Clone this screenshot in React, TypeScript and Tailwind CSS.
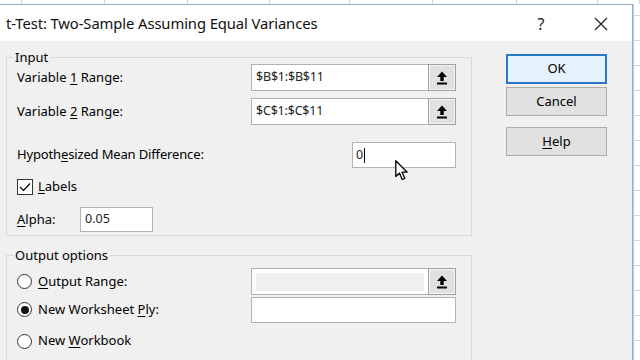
import React from "react";

const F = "font-['Noto_Sans',sans-serif]";

function U({ children }: { children: React.ReactNode }) {
  return <span className="underline underline-offset-2 decoration-1">{children}</span>;
}

function UploadIcon() {
  return (
    <svg width="10" height="14" viewBox="0 0 10 14">
      <polygon points="0,6 5,0.5 10,6" fill="#000" />
      <rect x="3.3" y="5.5" width="3.4" height="4.5" fill="#000" />
      <rect x="0" y="11.5" width="10" height="2" fill="#000" />
    </svg>
  );
}

function RangeBox({ value, disabled }: { value?: string; disabled?: boolean }) {
  return (
    <div className="flex w-[205px] h-[27px]">
      <div className="flex-1 flex items-center bg-white border border-[#b4b4b4] border-r-0 px-[4px]">
        {disabled ? (
          <div className="w-full h-[18px] bg-[#efefef]" />
        ) : (
          <span className="text-[12.5px] text-[#222] tracking-[-0.2px]">{value}</span>
        )}
      </div>
      <div className="w-[28px] flex items-center justify-center bg-[#e1e1e1] border border-[#a0a0a0] shadow-[inset_0_0_0_1px_#f4f4f4]">
        <UploadIcon />
      </div>
    </div>
  );
}

function Checkbox() {
  return (
    <div className="w-[16px] h-[16px] border border-[#333] bg-white flex items-center justify-center">
      <svg width="12" height="10" viewBox="0 0 12 10">
        <polyline points="1,5 4.5,8.5 11,1.5" fill="none" stroke="#000" strokeWidth="1.2" />
      </svg>
    </div>
  );
}

function Radio({ checked }: { checked?: boolean }) {
  return (
    <div className="w-[15px] h-[15px] rounded-full border border-[#333] bg-white flex items-center justify-center">
      {checked && <div className="w-[8px] h-[8px] rounded-full bg-[#111]" />}
    </div>
  );
}

export default function App() {
  const topCells = [22, 83, 83, 82, 80, 83, 84, 81, 42];
  return (
    <div className={`relative w-[640px] h-[360px] overflow-hidden bg-white flex flex-col ${F} text-[13px] text-black`}>
      <div className="h-[4px] flex shrink-0">
        {topCells.map((w, i) => (
          <div key={i} style={{ width: w }} className="h-full border-r border-[#d4d4d4] shrink-0" />
        ))}
      </div>
      <div className="flex flex-1">
        <div className="w-[633px] shrink-0 flex flex-col border-t border-r border-[#93aed0]">
          {/* Title bar */}
          <div className="h-[36px] bg-white flex items-center pt-[1px]">
            <div className="pl-[6px] text-[14.8px] text-[#111] tracking-[-0.1px]">
              t-Test: Two-Sample Assuming Equal Variances
            </div>
            <div className="flex-1" />
            <div className="w-[12px] text-[16px] text-[#222] mr-[47px] text-center">?</div>
            <svg width="14" height="14" viewBox="0 0 14 14" className="mr-[24px]">
              <path d="M1 1 L13 13 M13 1 L1 13" stroke="#222" strokeWidth="1.2" />
            </svg>
          </div>
          {/* Body */}
          <div className="flex-1 bg-[#f0f0f0] flex">
            <div className="ml-[6px] w-[466px] flex flex-col">
              <fieldset className="mt-[8px] border border-[#d9d9d9] pl-[10px] pr-[15px] pb-[3px]">
                <legend className="-ml-[4px] px-[2px] leading-[16px] text-[13px]">Input</legend>
                <div className="flex items-center h-[27px] -mt-[1px]">
                  <div className="w-[234px]">Variable <U>1</U> Range:</div>
                  <RangeBox value="$B$1:$B$11" />
                </div>
                <div className="flex items-center h-[27px] mt-[7px]">
                  <div className="w-[234px]">Variable <U>2</U> Range:</div>
                  <RangeBox value="$C$1:$C$11" />
                </div>
                <div className="flex items-center h-[26px] mt-[17px]">
                  <div className="w-[335px] tracking-[-0.15px]">Hypoth<U>e</U>sized Mean Difference:</div>
                  <div className="w-[104px] h-[26px] bg-white border border-[#b4b4b4] flex items-center pl-[3px]">
                    <span className="text-[12.5px] text-[#222]">0</span>
                    <div className="w-[1px] h-[15px] bg-black ml-[1px]" />
                  </div>
                </div>
                <div className="flex items-center h-[16px] mt-[11px]">
                  <Checkbox />
                  <div className="ml-[5px]"><U>L</U>abels</div>
                </div>
                <div className="flex items-center h-[25px] mt-[12px]">
                  <div className="w-[63px]"><U>A</U>lpha:</div>
                  <div className="w-[73px] h-[25px] bg-white border border-[#b4b4b4] flex items-center pl-[4px]">
                    <span className="text-[12.5px] text-[#222]">0.05</span>
                  </div>
                </div>
              </fieldset>
              <fieldset className="mt-[11px] border border-[#d9d9d9] pl-[10px] pr-[15px] pb-[20px]">
                <legend className="-ml-[4px] px-[2px] leading-[16px] text-[13px]">Output options</legend>
                <div className="flex items-center h-[27px] mt-[5px]">
                  <div className="w-[234px] flex items-center">
                    <Radio />
                    <div className="ml-[6px]"><U>O</U>utput Range:</div>
                  </div>
                  <RangeBox disabled />
                </div>
                <div className="flex items-center h-[27px] mt-[1px]">
                  <div className="w-[234px] flex items-center">
                    <Radio checked />
                    <div className="ml-[6px]">New Worksheet <U>P</U>ly:</div>
                  </div>
                  <div className="w-[205px] h-[26px] bg-white border border-[#b4b4b4]" />
                </div>
                <div className="flex items-center h-[20px] mt-[8px]">
                  <Radio />
                  <div className="ml-[6px]">New <U>W</U>orkbook</div>
                </div>
              </fieldset>
            </div>
            <div className="ml-[34px] mt-[13px] w-[101px] flex flex-col">
              <div className="h-[30px] flex items-center justify-center bg-[#e5f1fb] border-2 border-[#2a78c8]">OK</div>
              <div className="h-[29px] mt-[3px] flex items-center justify-center bg-[#e1e1e1] border border-[#adadad]">Cancel</div>
              <div className="h-[29px] mt-[11px] flex items-center justify-center bg-[#e1e1e1] border border-[#adadad]"><U>H</U>elp</div>
            </div>
          </div>
        </div>
        <div className="flex-1 flex flex-col border-l border-[#b9cde4]">
          <div className="h-[12px] border-b border-[#d4d4d4] shrink-0" />
          {Array.from({ length: 14 }).map((_, i) => (
            <div key={i} className="h-[25px] border-b border-[#d4d4d4] shrink-0" />
          ))}
        </div>
      </div>
      <svg width="15" height="22" viewBox="0 0 15 22" className="absolute left-[395px] top-[160px]">
        <path d="M0.8 0.8 L0.8 16.5 L4.5 13 L7.2 19.5 L9.8 18.4 L7.1 12.2 L12.2 12.2 Z" fill="#fff" stroke="#000" strokeWidth="1.3" strokeLinejoin="round" />
      </svg>
    </div>
  );
}
